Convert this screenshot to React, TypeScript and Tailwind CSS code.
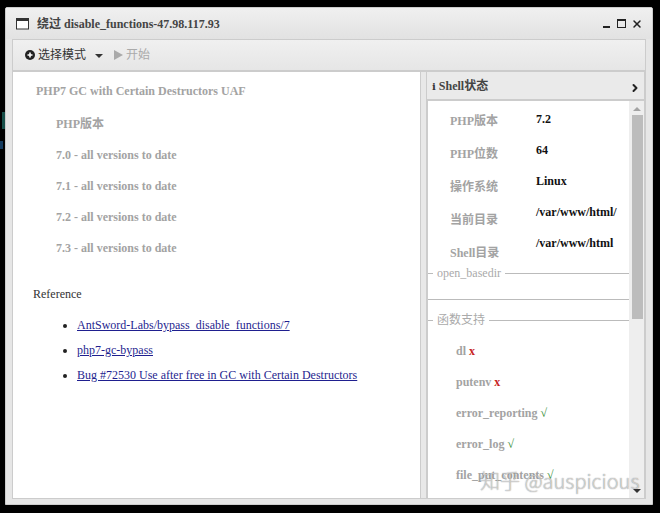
import { ChevronRight, X } from "lucide-react";

const versions = ["7.0 - all versions to date", "7.1 - all versions to date", "7.2 - all versions to date", "7.3 - all versions to date"];

const links = [
  { label: "AntSword-Labs/bypass_disable_functions/7", top: "mt-0" },
  { label: "php7-gc-bypass", top: "mt-[9px]" },
  { label: "Bug #72530 Use after free in GC with Certain Destructors", top: "mt-[9px]" },
];

const infos = [
  { name: "PHP版本", value: "7.2" },
  { name: "PHP位数", value: "64" },
  { name: "操作系统", value: "Linux" },
  { name: "当前目录", value: "/var/www/html/" },
  { name: "Shell目录", value: "/var/www/html" },
];

const funcs = [
  { name: "dl", ok: false },
  { name: "putenv", ok: false },
  { name: "error_reporting", ok: true },
  { name: "error_log", ok: true },
  { name: "file_put_contents", ok: true },
];

function LegendLine({ label }: { label: string }) {
  return (
    <div className="flex h-[14px] items-center text-[12px] text-[#aaa]">
      <span className="h-px w-[5px] bg-[#bbb]" />
      <span className="px-[4px]">{label}</span>
      <span className="h-px flex-1 bg-[#bbb]" />
    </div>
  );
}

export default function App() {
  return (
    <div className="relative h-[513px] w-[660px] overflow-hidden bg-black pl-[5px] pt-[7px] font-['Liberation_Serif','Noto_Sans_CJK_SC',serif]">
      <div className="flex h-[498px] w-[648px] flex-col rounded-t-[2px] border border-[#ccc] bg-[#e6e6e6]">
        {/* title bar */}
        <div className="flex h-[31px] shrink-0 items-center bg-gradient-to-b from-[#f0f0f0] to-[#e2e2e2] pl-[10px] pr-[9px]">
          <svg width="13" height="13" viewBox="0 0 13 13" className="mr-[8px]">
            <rect x="0.5" y="1.5" width="12" height="10.5" fill="#fff" stroke="#333" />
            <rect x="0" y="1" width="13" height="3" fill="#333" />
          </svg>
          <span className="text-[12px] font-bold text-[#444]">绕过 disable_functions-47.98.117.93</span>
          <div className="ml-auto flex items-center text-[#222]">
            <span className="mt-[7px] h-[2px] w-[7px] bg-[#222]" />
            <span className="ml-[7px] h-[9px] w-[9px] border border-t-2 border-[#222]" />
            <X size={12} strokeWidth={3} className="ml-[5px]" />
          </div>
        </div>

        <div className="mx-[6px] flex h-[460px] flex-col border border-[#ccc] bg-[#eee]">
          {/* toolbar */}
          <div className="flex h-[32px] shrink-0 items-center border-b-2 border-[#ccc] bg-gradient-to-b from-[#f0f0f0] to-[#e6e6e6] pl-[12px] font-['Liberation_Sans','Noto_Sans_CJK_SC',sans-serif] text-[12px]">
            <svg width="10" height="10" viewBox="0 0 10 10">
              <circle cx="5" cy="5" r="5" fill="#222" />
              <path d="M5 2.5v5M2.5 5h5" stroke="#fff" strokeWidth="1.6" />
            </svg>
            <span className="ml-[3px] text-[#333]">选择模式</span>
            <span className="ml-[9px] mt-[2px] h-0 w-0 border-x-[4px] border-t-[4px] border-x-transparent border-t-[#333]" />
            <span className="ml-[11px] h-0 w-0 border-y-[5px] border-l-[9px] border-y-transparent border-l-[#aaa]" />
            <span className="ml-[3px] text-[#aaa]">开始</span>
          </div>

          <div className="flex min-h-0 flex-1 bg-[#e8e8e8]">
            {/* left panel */}
            <div className="w-[408px] shrink-0 border-r border-[#ccc] bg-white pt-[11px]">
              <div className="pl-[23px] text-[12px] font-bold leading-[16px] text-[#a3a3a3]">PHP7 GC with Certain Destructors UAF</div>
              <div className="mt-[17px] pl-[43px] text-[12px] font-bold leading-[16px] text-[#a3a3a3]">PHP版本</div>
              <div className="mt-[15px] flex flex-col gap-[15px] pl-[43px] text-[12px] font-bold leading-[16px] text-[#a3a3a3]">
                {versions.map((v) => (
                  <div key={v}>{v}</div>
                ))}
              </div>
              <div className="mt-[30px] pl-[20px] text-[12px] leading-[16px] text-[#333]">Reference</div>
              <ul className="mt-[15px] list-disc pl-[64px] text-[12px] leading-[16px]">
                {links.map((l) => (
                  <li key={l.label} className={`${l.top} marker:text-[#222]`}>
                    <a className="text-[#1f1f8f] underline">{l.label}</a>
                  </li>
                ))}
              </ul>
            </div>

            {/* right panel */}
            <div className="ml-[5px] flex min-w-0 flex-1 flex-col border-x border-[#ccc] bg-white">
              <div className="flex h-[29px] shrink-0 items-center border-b-2 border-[#ccc] bg-[#eaeaea] pl-[5px] pr-[3px] text-[12px] font-bold text-[#444]">
                <span className="mr-[3px] mt-[2px] font-['DejaVu_Serif',serif] text-[10px] leading-[12px] text-[#333]">i</span>
                <span>Shell状态</span>
                <ChevronRight size={12} strokeWidth={4} className="ml-auto mt-[4px] text-[#222]" />
              </div>

              <div className="flex min-h-0 flex-1">
                <div className="min-w-0 flex-1 overflow-hidden border-l border-[#ccc]">
                  <div className="relative h-[165px] shrink-0 pl-[22px] pt-[12px]">
                    <div className="flex flex-col gap-[17px] text-[12px] font-bold leading-[16px] text-[#a3a3a3]">
                      {infos.map((i) => (
                        <div key={i.name}>{i.name}</div>
                      ))}
                    </div>
                    <div className="absolute left-[108px] top-[10px] flex flex-col gap-[15px] text-[12px] font-bold leading-[16px] text-[#111]">
                      {infos.map((i) => (
                        <div key={i.value}>{i.value}</div>
                      ))}
                    </div>
                  </div>
                  <LegendLine label="open_basedir" />
                  <div className="h-[20px] border-b border-[#bbb]" />
                  <div className="mt-[13px]">
                    <LegendLine label="函数支持" />
                  </div>
                  <div className="mt-[16px] flex flex-col gap-[15px] pl-[28px] text-[12px] font-bold leading-[16px] text-[#a3a3a3]">
                    {funcs.map((f) => (
                      <div key={f.name}>
                        {f.name} {f.ok ? <span className="font-normal text-[#2e8b2e]">√</span> : <span className="text-[#c81e1e]">x</span>}
                      </div>
                    ))}
                  </div>
                </div>

                {/* scrollbar */}
                <div className="flex w-[15px] shrink-0 flex-col items-center bg-[#eee] pl-px">
                  <span className="mt-[6px] h-0 w-0 border-x-[4px] border-b-[4px] border-x-transparent border-b-[#a3a3a3]" />
                  <span className="mt-[4px] h-[204px] w-[11px] bg-[#bcbcbc]" />
                  <span className="mb-[5px] mt-auto h-0 w-0 border-x-[4px] border-t-[4px] border-x-transparent border-t-[#333]" />
                </div>
              </div>
            </div>
          </div>
        </div>
      </div>

      {/* stray terminal text behind the window */}
      <span className="absolute left-[2px] top-[112px] h-[17px] w-[3px] bg-[#174f49]" />
      <span className="absolute left-0 top-[141px] h-[8px] w-[3px] bg-[#143a5e]" />

      {/* watermark */}
      <div className="absolute left-[480px] top-[467px] font-['Noto_Sans_CJK_SC','Noto_Sans',sans-serif] text-[20px] font-light leading-[28px] text-white/60 [text-shadow:0_0_1px_rgba(70,70,70,0.8)]">
        知乎 @auspicious
      </div>
    </div>
  );
}
